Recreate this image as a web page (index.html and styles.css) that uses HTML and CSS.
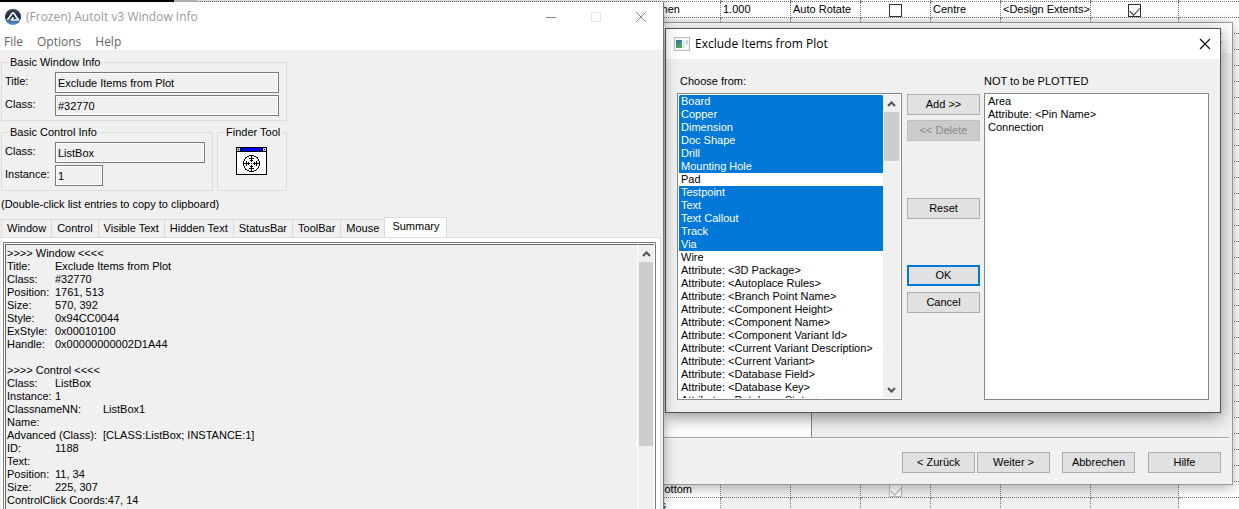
FILE: index.html
```html
<!DOCTYPE html>
<html lang="en">
<head>
    <meta charset="utf-8">
    <title>Exclude Items from Plot</title>
    <link rel="stylesheet" href="styles.css">
</head>
<body>
    <div class="desktop">
        <table class="sheet" id="sheet">
            <colgroup>
                <col class="col-name"><col class="col-num"><col class="col-num"><col class="col-num"><col class="col-num"><col class="col-extents"><col class="col-check"><col>
            </colgroup>
            <tbody>
                <tr class="first"><td></td><td></td><td></td><td></td><td></td><td></td><td></td><td></td></tr>
                <tr>
                    <td class="name">Dimen</td><td>1.000</td><td>Auto Rotate</td>
                    <td class="tick"><input type="checkbox" aria-label="Mirror"></td>
                    <td>Centre</td><td>&lt;Design Extents&gt;</td>
                    <td class="tick"><input type="checkbox" aria-label="Plot" checked></td><td></td>
                </tr>
                <tr class="bottom" id="bottom-row">
                    <td class="name">Bottom</td><td></td><td></td>
                    <td class="tick"><input type="checkbox" aria-label="Mirror bottom" checked disabled></td>
                    <td></td><td></td><td></td><td></td>
                </tr>
                <tr class="bottom"><td class="name short">s</td><td></td><td></td><td></td><td></td><td></td><td></td><td></td></tr>
            </tbody>
        </table>

        <!-- Plot wizard -->
        <section class="wizard">
            <header class="wizard-title">
                <button type="button" class="icon-btn" aria-label="Close wizard">
                    <svg width="12" height="12" viewBox="0 0 12 12"><path d="M1 1l10 10M11 1L1 11" stroke="#888"/></svg>
                </button>
            </header>
            <div class="wizard-body"><div class="wizard-list"></div></div>
            <footer class="wizard-buttons">
                <button type="button">&lt; Zurück</button>
                <button type="button">Weiter &gt;</button>
                <button type="button" class="cancel">Abbrechen</button>
                <button type="button" class="help">Hilfe</button>
            </footer>
        </section>

        <!-- Exclude items dialog -->
        <section class="dialog">
            <header class="dialog-title">
                <svg width="16" height="14" viewBox="0 0 16 14">
                    <rect x="0.5" y="0.5" width="15" height="13" fill="#f4f6f8" stroke="#b4bac0"/>
                    <rect x="2" y="3" width="6" height="8" fill="#3c7f9c"/>
                    <path d="M2 11V8l6-3v6z" fill="#4f9a6c"/>
                    <rect x="9" y="3" width="2" height="8" fill="#dde5ea"/>
                    <rect x="12" y="3" width="2" height="4" fill="#c3d6cf"/>
                </svg>
                <h1>Exclude Items from Plot</h1>
                <button type="button" class="icon-btn" aria-label="Close">
                    <svg width="12" height="12" viewBox="0 0 12 12"><path d="M1 1l10 10M11 1L1 11" stroke="#111" stroke-width="1.2"/></svg>
                </button>
            </header>
            <div class="dialog-body">
                <div class="list-col">
                    <label for="choose">Choose from:</label>
                    <div class="listbox">
                        <select id="choose" multiple size="23">
                            <option selected>Board</option>
                            <option selected>Copper</option>
                            <option selected>Dimension</option>
                            <option selected>Doc Shape</option>
                            <option selected>Drill</option>
                            <option selected>Mounting Hole</option>
                            <option>Pad</option>
                            <option selected>Testpoint</option>
                            <option selected>Text</option>
                            <option selected>Text Callout</option>
                            <option selected>Track</option>
                            <option selected>Via</option>
                            <option>Wire</option>
                            <option>Attribute: &lt;3D Package&gt;</option>
                            <option>Attribute: &lt;Autoplace Rules&gt;</option>
                            <option>Attribute: &lt;Branch Point Name&gt;</option>
                            <option>Attribute: &lt;Component Height&gt;</option>
                            <option>Attribute: &lt;Component Name&gt;</option>
                            <option>Attribute: &lt;Component Variant Id&gt;</option>
                            <option>Attribute: &lt;Current Variant Description&gt;</option>
                            <option>Attribute: &lt;Current Variant&gt;</option>
                            <option>Attribute: &lt;Database Field&gt;</option>
                            <option>Attribute: &lt;Database Key&gt;</option>
                            <option>Attribute: &lt;Database Status&gt;</option>
                        </select>
                        <div class="scrollbar">
                            <svg class="arrow" width="9" height="6" viewBox="0 0 9 6"><path d="M1 5l3.500-3.500L8 5" fill="none" stroke="#505050" stroke-width="2"/></svg>
                            <div class="thumb"></div>
                            <svg class="arrow down" width="9" height="6" viewBox="0 0 9 6"><path d="M1 1l3.500 3.500L8 1" fill="none" stroke="#505050" stroke-width="2"/></svg>
                        </div>
                    </div>
                </div>
                <div class="dialog-buttons">
                    <button type="button">Add &gt;&gt;</button>
                    <button type="button" disabled>&lt;&lt; Delete</button>
                    <button type="button" class="reset">Reset</button>
                    <button type="button" class="default">OK</button>
                    <button type="button">Cancel</button>
                </div>
                <div class="list-col">
                    <label for="excluded">NOT to be PLOTTED</label>
                    <div class="listbox">
                        <select id="excluded" multiple size="23">
                            <option>Area</option>
                            <option>Attribute: &lt;Pin Name&gt;</option>
                            <option>Connection</option>
                        </select>
                    </div>
                </div>
            </div>
        </section>

        <!-- AutoIt window info -->
        <div class="top-strip"></div>
        <section class="autoit">
            <header class="autoit-title">
                <svg width="16" height="16" viewBox="0 0 16 16">
                    <defs><linearGradient id="ball" x1="0" y1="0" x2="0" y2="1"><stop offset="0" stop-color="#34425a"/><stop offset="0.500" stop-color="#1d2c44"/><stop offset="1" stop-color="#5fa0e0"/></linearGradient></defs>
                    <circle cx="8" cy="8" r="8" fill="url(#ball)"/>
                    <path d="M2.500 11L7 4.500q1-1.200 2 0L13.500 11H6.500L8.300 8.300" fill="none" stroke="#f2f4f8" stroke-width="1.700" stroke-linejoin="round"/>
                </svg>
                <h2>(Frozen) AutoIt v3 Window Info</h2>
                <button type="button" class="icon-btn" aria-label="Minimize"><svg width="12" height="12" viewBox="0 0 12 12"><path d="M1 6.500h10" stroke="#888"/></svg></button>
                <button type="button" class="icon-btn" aria-label="Maximize" disabled><svg width="12" height="12" viewBox="0 0 12 12"><rect x="1.500" y="1.500" width="9" height="9" fill="none" stroke="#e4e4e4"/></svg></button>
                <button type="button" class="icon-btn" aria-label="Close"><svg width="12" height="12" viewBox="0 0 12 12"><path d="M1 1l10 10M11 1L1 11" stroke="#888"/></svg></button>
            </header>
            <nav class="menu">
                <a href="#">File</a>
                <a href="#">Options</a>
                <a href="#">Help</a>
            </nav>
            <div class="autoit-body">
                <fieldset class="group wide">
                    <legend>Basic Window Info</legend>
                    <label for="win-title">Title:</label>
                    <input type="text" id="win-title" value="Exclude Items from Plot" readonly>
                    <label for="win-class">Class:</label>
                    <input type="text" id="win-class" value="#32770" readonly>
                </fieldset>
                <div class="group-row">
                    <fieldset class="group">
                        <legend>Basic Control Info</legend>
                        <label for="ctl-class">Class:</label>
                        <input type="text" id="ctl-class" value="ListBox" readonly>
                        <label for="ctl-instance">Instance:</label>
                        <input type="text" id="ctl-instance" class="small" value="1" readonly>
                    </fieldset>
                    <fieldset class="group finder">
                        <legend>Finder Tool</legend>
                        <svg width="31" height="28" viewBox="0 0 31 28" shape-rendering="crispEdges">
                            <rect x="0.500" y="0.500" width="30" height="27" fill="#fff" stroke="#000"/>
                            <rect x="1" y="1" width="29" height="3" fill="#0000f0"/>
                            <path d="M0 4.500h31" stroke="#000"/>
                            <rect x="1" y="1" width="3" height="3" fill="#ccc"/>
                            <rect x="27" y="1" width="3" height="3" fill="#ccc"/>
                            <path d="M4.500 0v5M26.500 0v5M2 2.500h1M28 2.500h1" stroke="#000"/>
                            <circle cx="15.500" cy="16.500" r="8" fill="none" stroke="#000"/>
                            <path d="M15.500 8v7M15.500 18v7M7 16.500h7M17 16.500h7M13 11.500h5M14 13.500h3M14 19.500h3M13 21.500h5M10.500 14v5M12.500 15v3M18.500 15v3M20.500 14v5M15 16.500h1" stroke="#000"/>
                        </svg>
                    </fieldset>
                </div>
                <p class="hint">(Double-click list entries to copy to clipboard)</p>
                <div class="tabs" role="tablist">
                    <button type="button" role="tab">Window</button>
                    <button type="button" role="tab">Control</button>
                    <button type="button" role="tab">Visible Text</button>
                    <button type="button" role="tab">Hidden Text</button>
                    <button type="button" role="tab">StatusBar</button>
                    <button type="button" role="tab">ToolBar</button>
                    <button type="button" role="tab">Mouse</button>
                    <button type="button" role="tab" class="active" aria-selected="true">Summary</button>
                </div>
                <div class="tab-panel">
                    <div class="summary">
                        <textarea aria-label="Summary" readonly>&gt;&gt;&gt;&gt; Window &lt;&lt;&lt;&lt;
Title:	Exclude Items from Plot
Class:	#32770
Position:	1761, 513
Size:	570, 392
Style:	0x94CC0044
ExStyle:	0x00010100
Handle:	0x00000000002D1A44

&gt;&gt;&gt;&gt; Control &lt;&lt;&lt;&lt;
Class:	ListBox
Instance:	1
ClassnameNN:	ListBox1
Name:
Advanced (Class):	[CLASS:ListBox; INSTANCE:1]
ID:	1188
Text:
Position:	11, 34
Size:	225, 307
ControlClick Coords:47, 14
Style:	0x50310909</textarea>
                        <div class="scrollbar">
                            <svg class="arrow" width="9" height="6" viewBox="0 0 9 6"><path d="M1 5l3.500-3.500L8 5" fill="none" stroke="#505050" stroke-width="2"/></svg>
                            <div class="thumb"></div>
                        </div>
                    </div>
                </div>
            </div>
        </section>
    </div>
    <script>
        // empty sheet rows between the first and the bottom layer
        const bottomRow = document.getElementById('bottom-row');
        for (let i = 0; i < 29; i++) {
            const row = document.createElement('tr');
            row.innerHTML = '<td></td>'.repeat(8);
            bottomRow.before(row);
        }
    </script>
</body>
</html>
```
FILE: styles.css
```css
* {
    box-sizing: border-box;
}

body {
    margin: 0;
    font-family: "Liberation Sans", Arial, sans-serif;
    font-size: 11px;
    line-height: 13px;
    color: #000;
}

button, input, select, textarea {
    font: inherit;
    color: inherit;
    margin: 0;
}

h1, h2 {
    margin: 0;
    flex: 1;
    font-family: "Open Sans", "Noto Sans", sans-serif;
    font-size: 12px;
    line-height: 16px;
    font-weight: normal;
}

.desktop {
    position: relative;
    height: 100vh;
    overflow: hidden;
    background: #fff;
}

/* background sheet */
.sheet {
    width: 100%;
    table-layout: fixed;
    border-collapse: separate;
    border-spacing: 0;
}

.sheet td {
    height: 16px;
    padding: 0 2px;
    line-height: 15px;
    border-right: 1px dotted #777;
    border-bottom: 1px dotted #777;
    white-space: nowrap;
    overflow: hidden;
}

.sheet td:last-child {
    border-right: none;
}

.sheet .first td {
    height: 2px;
}

.col-name { width: 721px; }
.col-num { width: 70px; }
.col-extents { width: 90px; }
.col-check { width: 88px; }

.sheet .name {
    padding-right: 40px;
    text-align: right;
}

.sheet .bottom .name {
    padding-right: 28px;
}

.sheet .bottom .short {
    padding-right: 54px;
}

.sheet .bottom td:not(.name):not(:last-child) {
    background: #f0f0f0;
}

.tick {
    text-align: center;
}

.tick input {
    appearance: none;
    display: block;
    width: 13px;
    height: 13px;
    margin: 2px auto 0;
    border: 1px solid #333;
    background: #fff;
}

.tick input:checked::before {
    content: "";
    display: block;
    width: 9px;
    height: 5px;
    margin: 2px 1px;
    border: solid #333;
    border-width: 0 0 1px 1px;
    transform: rotate(-45deg);
}

.tick input:disabled {
    border-color: #bbb;
}

.tick input:disabled::before {
    border-color: #aaa;
}

/* wizard */
.wizard {
    position: absolute;
    top: 22px;
    left: 640px;
    right: 6px;
    height: 463px;
    display: flex;
    flex-direction: column;
    background: #f0f0f0;
    border: 1px solid #999;
    box-shadow: 0 3px 12px rgba(0, 0, 0, 0.3);
}

.wizard-title {
    display: flex;
    justify-content: flex-end;
    align-items: center;
    height: 30px;
    padding-right: 9px;
    background: #fff;
}

.wizard-body {
    flex: 1;
    margin-right: 3px;
    border-bottom: 1px solid #a0a0a0;
    box-shadow: 0 1px #fff;
}

.wizard-list {
    width: 171px;
    height: 100%;
    background: #fff;
    border-right: 1px solid #828790;
}

.wizard-buttons {
    display: flex;
    justify-content: flex-end;
    gap: 2px;
    padding: 14px 11px 11px;
}

.wizard-buttons .cancel {
    margin-left: 10px;
}

.wizard-buttons .help {
    margin-left: 11px;
}

.wizard-buttons button, .dialog-buttons button {
    width: 73px;
    height: 21px;
    padding: 0;
    background: #e1e1e1;
    border: 1px solid #adadad;
}

/* exclude items dialog */
.dialog {
    position: absolute;
    top: 28px;
    left: 665px;
    right: 18px;
    background: #f0f0f0;
    border: 1px solid #555;
    box-shadow: 0 4px 16px rgba(0, 0, 0, 0.45);
}

.dialog-title {
    display: flex;
    align-items: center;
    gap: 5px;
    height: 30px;
    padding: 0 9px 0 8px;
    background: #fff;
}

.icon-btn {
    display: flex;
    padding: 0;
    border: none;
    background: none;
}

.dialog-body {
    display: flex;
    gap: 4px;
    padding: 16px 11px 12px;
}

.list-col {
    flex: 1;
    min-width: 0;
}

.list-col label {
    display: block;
    padding-left: 3px;
    margin-bottom: 5px;
}

.list-col:last-child label {
    padding-left: 0;
}

.listbox {
    display: flex;
    height: 307px;
    padding: 1px;
    background: #fff;
    border: 1px solid #828790;
}

.listbox select {
    flex: 1;
    min-width: 0;
    height: 100%;
    padding: 0;
    border: none;
    outline: none;
    background: #fff;
    overflow: hidden;
    scrollbar-width: none;
}

.listbox option {
    min-height: 13px;
    height: 13px;
    padding: 0 2px;
    line-height: 13px;
}

.listbox option:checked {
    color: #fff;
    background: #0078d7 linear-gradient(#0078d7, #0078d7);
}

.scrollbar {
    display: flex;
    flex-direction: column;
    align-items: center;
    width: 17px;
    padding: 0 1px;
    background: #f0f0f0;
}

.scrollbar .arrow {
    flex: none;
    margin: 6px 0 5px;
}

.scrollbar .down {
    margin-top: auto;
}

.thumb {
    width: 100%;
    height: 49px;
    background: #cdcdcd;
}

.dialog-buttons {
    display: flex;
    flex-direction: column;
    gap: 5px;
    padding: 19px 0 0 1px;
}

.dialog-buttons button:disabled {
    color: #888;
    background: #ccc;
    border-color: #bfbfbf;
}

.dialog-buttons .reset {
    margin: 52px 0 41px;
}

.dialog-buttons .default {
    margin-bottom: 1px;
    border: 2px solid #0078d7;
}

/* autoit window */
.top-strip {
    position: absolute;
    top: 0;
    left: 0;
    width: 197px;
    height: 2px;
    background: linear-gradient(90deg, #000 174px, #ccc 174px);
}

.autoit {
    position: absolute;
    top: 2px;
    left: 0;
    bottom: 0;
    width: 664px;
    display: flex;
    flex-direction: column;
    background: #f0f0f0;
    border-right: 1px solid #777;
    box-shadow: 0 0 12px rgba(0, 0, 0, 0.35);
}

.autoit-title {
    display: flex;
    align-items: center;
    height: 29px;
    padding: 0 16px 0 5px;
    color: #999;
    background: #fff;
}

.autoit-title h2 {
    margin-left: 5px;
}

.autoit-title .icon-btn {
    margin-left: 33px;
}

.menu {
    display: flex;
    gap: 14px;
    height: 19px;
    padding-left: 4px;
    background: #fff;
    font-family: "Open Sans", "Noto Sans", sans-serif;
    font-size: 12px;
    line-height: 21px;
}

.menu a {
    color: #666;
    text-decoration: none;
}

.autoit-body {
    flex: 1;
    display: flex;
    flex-direction: column;
    min-height: 0;
    padding: 6px 2px 0 1px;
}

.group {
    display: grid;
    grid-template-columns: 50px 150px;
    align-content: start;
    gap: 2px 0;
    width: 212px;
    height: 65px;
    margin: 0;
    padding: 3px 0 0 3px;
    border: 1px solid #dcdcdc;
}

.wide {
    grid-template-columns: 50px 224px;
    width: 286px;
}

.group legend {
    margin-left: 3px;
    padding: 0 2px;
}

.group label {
    padding-top: 3px;
}

.group input {
    width: 100%;
    height: 21px;
    padding: 0 2px;
    border: 1px solid #7a7a7a;
    background: #f0f0f0;
    box-shadow: inset 0 0 0 1px #fff;
    outline: none;
}

.group .small {
    width: 48px;
}

.group-row {
    display: flex;
    gap: 4px;
    margin-top: 5px;
}

.finder {
    display: block;
    width: 70px;
    padding: 8px 0 0 18px;
}

.finder legend {
    margin-left: -12px;
}

.hint {
    margin: 7px 0 6px;
}

.tabs {
    display: flex;
    align-items: flex-end;
}

.tabs button {
    height: 18px;
    padding: 0 5px;
    border: 1px solid #d9d9d9;
    border-width: 1px 0 0 1px;
    background: #f0f0f0;
}

.tabs .active {
    height: 20px;
    padding: 0 7px 3px;
    border-right-width: 1px;
    background: #fff;
}

.tab-panel {
    flex: 1;
    display: flex;
    min-height: 0;
    padding: 4px 4px 0 2px;
    background: #fff;
    border: 1px solid #dcdcdc;
    border-width: 1px 1px 0 0;
}

.summary {
    flex: 1;
    display: flex;
    padding: 1px 1px 0;
    border: 1px solid #7a7a7a;
    border-bottom: none;
}

.summary textarea {
    flex: 1;
    padding: 2px 1px;
    border: 1px solid #696969;
    border-width: 1px 0 0 1px;
    background: #f0f0f0;
    outline: none;
    resize: none;
    overflow: hidden;
    tab-size: 48px;
}

.summary .scrollbar {
    border-top: 1px solid #696969;
    border-left: 1px solid #fff;
}

.summary .thumb {
    height: 184px;
}
```
